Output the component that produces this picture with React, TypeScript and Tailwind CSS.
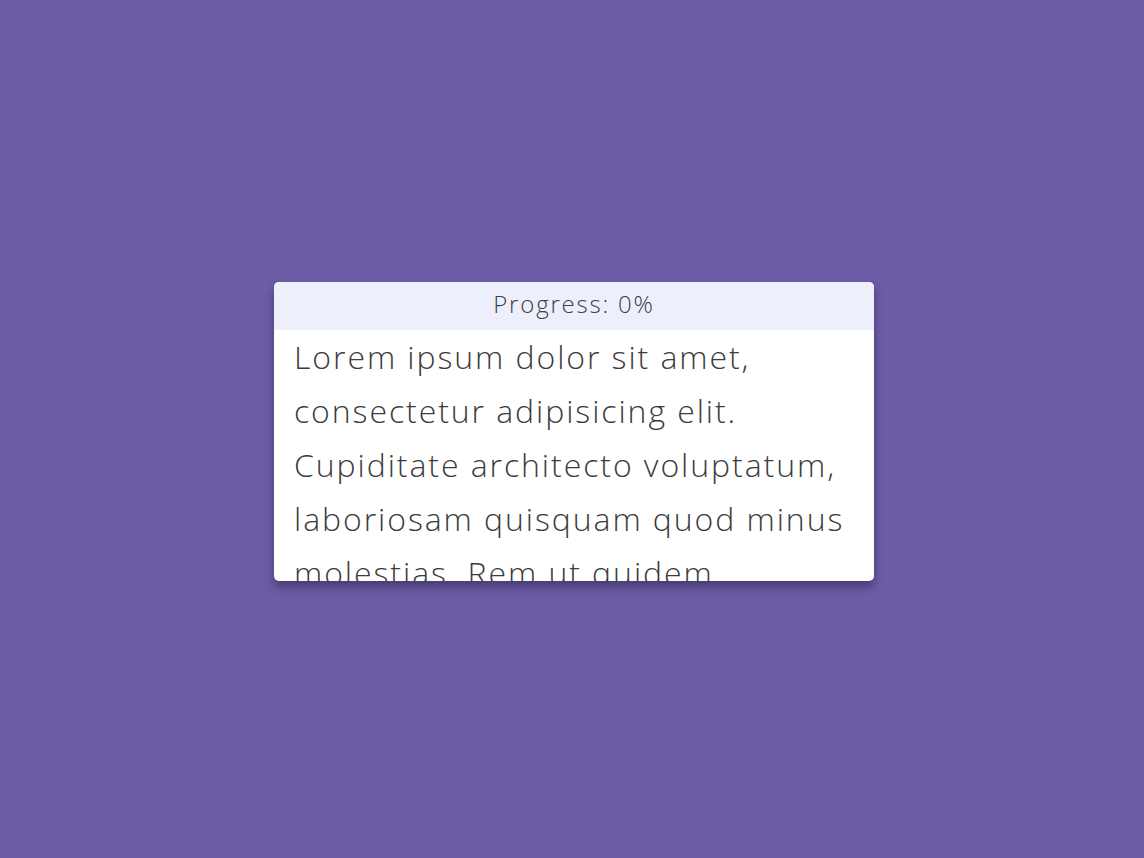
export default function App() {
  return (
    <div className="min-h-screen w-full bg-[#6c5ca6] flex items-center justify-center pl-[4px] pt-[4px] font-['Open_Sans','Noto_Sans',sans-serif]">
      <div className="w-[600px] h-[299px] bg-white rounded-[5px] shadow-[0_6px_10px_rgba(30,20,60,0.45)] flex flex-col overflow-hidden">
        <div className="h-[48px] shrink-0 bg-[#eeeffd] flex items-center justify-center pb-[4px] text-[24px] font-light tracking-[0.075em] text-[#404040]">
          Progress: 0%
        </div>
        <div className="flex-1 overflow-hidden px-[20px] text-[32px] leading-[54px] font-light tracking-[0.06em] text-[#3c3c3c]">
          Lorem ipsum dolor sit amet,<br />
          consectetur adipisicing elit.<br />
          Cupiditate architecto voluptatum,<br />
          laboriosam quisquam quod minus<br />
          molestias. Rem ut quidem.
        </div>
      </div>
    </div>
  );
}
